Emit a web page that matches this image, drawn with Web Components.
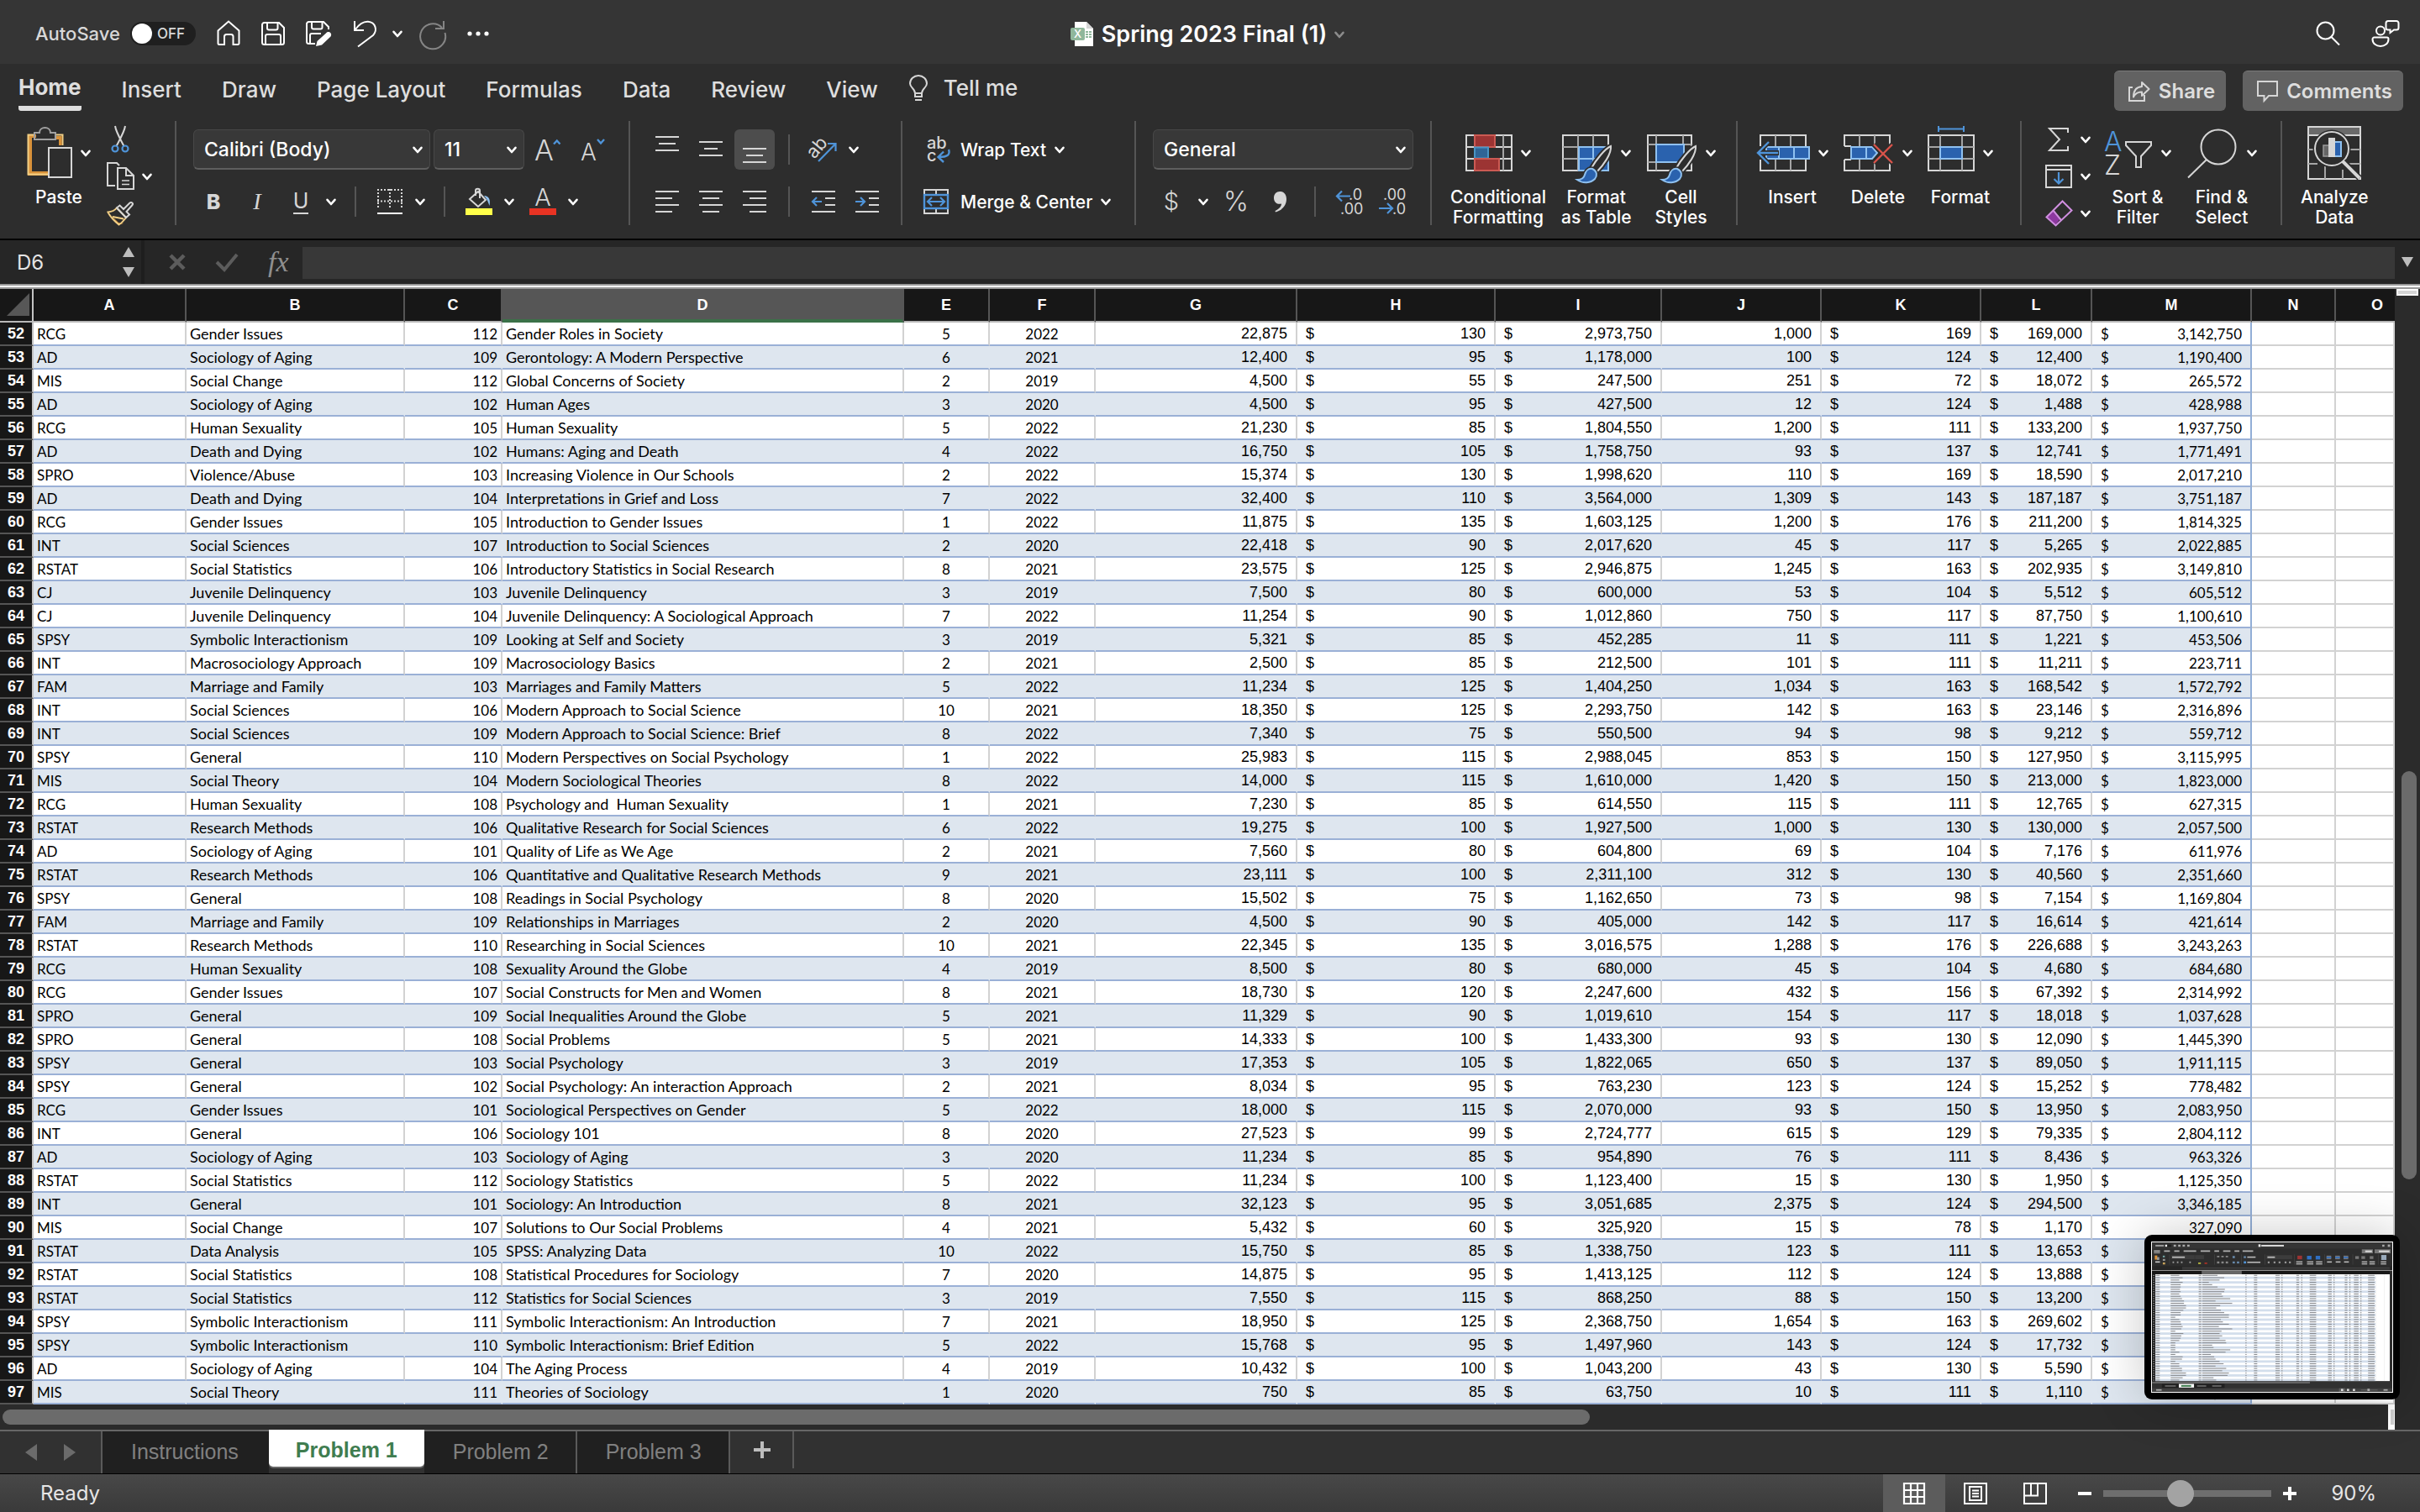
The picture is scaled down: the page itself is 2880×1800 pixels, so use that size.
<!DOCTYPE html>
<html lang="en">
<head>
<meta charset="utf-8">
<title>Spring 2023 Final (1)</title>
<style>
html,body{margin:0;height:100%;background:#2d2d2d}
body{font-family:Inter,"Liberation Sans",sans-serif;color:#fff}
</style>
</head>
<body>
<excel-window></excel-window>
<script>
/* ---------- helpers ---------- */
function define(name, html, setup) {
  const tpl = document.createElement('template');
  tpl.innerHTML = html;
  customElements.define(name, class extends HTMLElement {
    connectedCallback() {
      if (this.shadowRoot) return;
      const root = this.attachShadow({mode: 'open'});
      root.appendChild(tpl.content.cloneNode(true));
      if (setup) setup.call(this, root);
    }
  });
}
const BTN = 'button{font:inherit;color:inherit;background:none;border:0;padding:0;margin:0;cursor:default}';

/* ---------- icons: [width, height, markup] ---------- */
const G = '#d6d6d6', B = '#4f94d9', LB = '#8fc1f0', DB = '#2a62ae';
const s = (d, c = G, w = 2, x = '') => `<path d="${d}" fill="none" stroke="${c}" stroke-width="${w}" ${x}/>`;
const f = (d, c) => `<path d="${d}" fill="${c}"/>`;
const t = (x, y, size, str, extra = '') => `<text x="${x}" y="${y}" font-size="${size}" fill="${G}" ${extra}>${str}</text>`;
const brush = (x, y) => `<g transform="translate(${x} ${y})">` +
  s('M45 1C38 4 27 18 22 27L28 32C36 24 46 10 45 1z', '#2d2d2d', 6) +
  f('M45 1C38 4 27 18 22 27L28 32C36 24 46 10 45 1z', '#2d2d2d') +
  s('M45 1C38 4 27 18 22 27L28 32C36 24 46 10 45 1z', G, 2) +
  `<path d="M23 28c-5-1-8 3-9 7-1 4-4 6-9 6 7 5 16 4 21-1 3-4 3-9-3-12z" fill="${DB}" stroke="#2d2d2d" stroke-width="5"/>` +
  `<path d="M23 28c-5-1-8 3-9 7-1 4-4 6-9 6 7 5 16 4 21-1 3-4 3-9-3-12z" fill="${DB}" stroke="${LB}" stroke-width="2"/></g>`;
const ICONS = {
  chev: [12, 9, s('M1.5 1.8 6 7 10.5 1.8', 'currentColor', 2.6, 'stroke-linecap="round" stroke-linejoin="round"')],
  home: [28, 32, s('M1.5 12.5 14 1.5 26.5 12.5V27.5a1.5 1.5 0 0 1-1.5 1.5H19.5V19.5a2.5 2.5 0 0 0-2.5-2.5H11.5A2.5 2.5 0 0 0 9 19.5V29H3A1.5 1.5 0 0 1 1.500 27.500z', '#fff')],
  save: [28, 28, s('M3.500 1H21L27 7V24.500A2.500 2.500 0 0 1 24.500 27H3.500A2.500 2.500 0 0 1 1 24.500V3.500A2.500 2.500 0 0 1 3.500 1zM7 1V7.500A2 2 0 0 0 9 9.500H17.500A2 2 0 0 0 19.500 7.500V1M5 27V17A2 2 0 0 1 7 15H21A2 2 0 0 1 23 17V27', '#fff')],
  saveedit: [31, 30, s('M11 27H3.500A2.500 2.500 0 0 1 1 24.500V3.500A2.500 2.500 0 0 1 3.500 1H21L27 7V10M7 1V7.500A2 2 0 0 0 9 9.500H17.500A2 2 0 0 0 19.500 7.500V1M5 27V17A2 2 0 0 1 7 15H18', '#fff') + f('M24 14.500c3-3.500 8 0 5.500 4L19 28.500 12 30 13.500 24z', '#fff')],
  undo: [28, 32, s('M2 1V12H13M2.500 11.500C8 4 13 1.500 18 1.800 27 2.500 29.500 12 24 18L6 31.500', '#fff')],
  redo: [33, 32, s('M30 1V10H20M28 9A15 15 0 1 0 31.500 15', '#858585')],
  dots: [26, 6, '<circle cx="3" cy="3" r="2.600" fill="#fff"/><circle cx="13" cy="3" r="2.600" fill="#fff"/><circle cx="23" cy="3" r="2.600" fill="#fff"/>'],
  file: [28, 30, f('M5 0H19L27 8V29H5z', '#fff') + f('M19 0 27 8H19z', '#d5d5d5') + '<rect x="0" y="7" width="17" height="15" rx="2" fill="#8fb79b"/>' + f('M18 11h3v2h-3zM22 11h3v2h-3zM18 14h3v2h-3zM22 14h3v2h-3zM18 17h3v2h-3zM22 17h3v2h-3z', '#8fb79b') + '<text x="8.500" y="19" font-size="13" font-weight="500" text-anchor="middle" fill="#fff">X</text>'],
  search: [30, 30, '<circle cx="11.500" cy="11.500" r="10" fill="none" stroke="#fff" stroke-width="2"/>' + s('M18.500 19 28 28.500', '#fff')],
  people: [34, 32, '<circle cx="11" cy="12.500" r="5" fill="none" stroke="#fff" stroke-width="2"/>' + s('M3.500 20.500H18.500A2 2 0 0 1 20.500 22.500C20.500 28 16 31 11 31S1.500 28 1.500 22.500A2 2 0 0 1 3.500 20.500zM20 1H30A2.500 2.500 0 0 1 32.500 3.500V9A2.500 2.500 0 0 1 30 11.500H27L22.500 15V11.500H20A2.500 2.500 0 0 1 17.500 9V3.500A2.500 2.500 0 0 1 20 1z', '#fff')],
  bulb: [22, 32, s('M7 22C7 17 1 15 1 10.500a10 9.500 0 0 1 20 0C21 15 15 17 15 22zM7 22V26H15V22M7 30H15')],
  share: [26, 24, s('M5 7H1V23H19V16') + s('M16 1 24.500 9 16 17V12.500C11 12.500 8 14 6 18.500 6 11 9 6.500 16 6z', G, 2, 'stroke-linejoin="round"')],
  comment: [25, 26, s('M1 1H24V18H14L8.500 24V18H1z')],
  paste: [54, 62, f('M1 9H11V13H6V53H25V58H1z', '#d9923a') + s('M10 9.500H1.500V56.500H25M34 9.500H42.500V22', '#f2cf85') + f('M34 11H41.500V22H38V15H34z', '#d9923a') + s('M9 15V7H15C15 -1 28 -1 28 7H34V15z', '#a0a0a0') + `<rect x="26" y="25" width="27" height="35" fill="#2d2d2d" stroke="${G}" stroke-width="2"/>`],
  cut: [22, 34, s('M5 1C6 8 12 18 15.500 25M17 1C16 8 10 18 6.500 25', G, 2) + `<circle cx="5" cy="28" r="3.500" fill="none" stroke="${B}" stroke-width="2.200"/><circle cx="17" cy="28" r="3.500" fill="none" stroke="${B}" stroke-width="2.200"/>`],
  copy: [33, 34, s('M10 28H1V1H12L15 4M13 7H23L32 16V32H13zM23 7V16H32') + s('M18 22H27M18 26.500H27', G, 1.600)],
  painter: [33, 30, f('M5 17 14 26 20 27 14 28.500z', '#d9923a') + s('M1.500 13.500C7 13 10 11 12 8.500L23 20C20 24 17 27 14.500 28.500 9 24 4 19 1.500 13.500zM7 19 20 21.500', '#f2cf85') + s('M12 8.500 15.500 5.500 20 10 27.500 2.500C29.500 1 32 3 30.500 5L23.500 13 27 16.500 23 20z', G)],
  fontup: [32, 30, t(0, 28, 34, 'A', 'font-weight="300"') + s('M23 8.500 26.800 4.500 30.500 8.500', B, 2.400)],
  fontdown: [30, 30, t(2, 28, 28, 'A', 'font-weight="300"') + s('M22 3 26 7.500 30 3', B, 2.400)],
  borders: [30, 30, s('M1 0V24M15 0V24M29 0V24M0 1H30M0 14.500H30', G, 2, 'stroke-dasharray="2 2"') + s('M0 29H30', '#fff', 2)],
  fill: [34, 32, s('M6 13 16 4 25 14 16 22zM13 9V3C13 0 18 0 18 3V12', G, 2) + f('M23 9C29 9 31 14 29.500 21 28 17 27 13 23 9z', LB) + f('M1 24H33V32H1z', '#ffff4a')],
  fontcolor: [32, 32, t(16, 21, 29, 'A', 'font-weight="300" text-anchor="middle"') + f('M0 24H32V32H0z', '#e83323')],
  top: [28, 34, s('M0 2H28M4 10H24M0 18H28')],
  middle: [28, 34, s('M0 8H28M6 16H22M0 24H28')],
  bottom: [28, 34, s('M0 16H28M4 24H24M0 32H28')],
  left: [28, 28, s('M0 2H28M0 10H20M0 18H28M0 26H20')],
  center: [28, 28, s('M0 2H28M4 10H24M0 18H28M4 26H24')],
  right: [28, 28, s('M0 2H28M8 10H28M0 18H28M8 26H28')],
  orient: [34, 34, `<g transform="rotate(-50 8 24)">${t(3, 26, 22, 'ab')}</g>` + s('M11 31 31 10.500M22 10H31.500V19', B, 2.200)],
  outdent: [28, 28, s('M0 2H28M16 10H28M16 18H28M0 26H28') + s('M12 14H1M6 9 1 14 6 19', B, 2.200)],
  indent: [28, 28, s('M0 2H28M16 10H28M16 18H28M0 26H28') + s('M0 14H11M6 9 11 14 6 19', B, 2.200)],
  wrap: [34, 34, t(4, 16, 20, 'ab') + t(4, 31, 20, 'c') + s('M30 17C32 23 29 26 18 26M24 19.500 17.500 26 24 32', B, 2.400)],
  merge: [34, 30, s('M1 7V1H29V7M1 23V29H29V23M15 1V7M15 23V29') + `<rect x="1" y="7" width="28" height="16" fill="none" stroke="${B}" stroke-width="2.400"/>` + s('M5 15H25M10 10 5 15 10 20M20 10 25 15 20 20', B, 2.200)],
  dollar: [20, 34, t(8, 27, 29, '$', 'font-weight="300" text-anchor="middle"')],
  percent: [34, 34, t(16, 28, 32, '%', 'font-weight="300" text-anchor="middle"')],
  comma: [16, 26, f('M7 1C12 1 15 4.500 15 10 15 17 10 23.500 2 25.500L1.500 24C6 22 9 19 9 15.500 3 17 0 13 0 8.500 0 4 3 1 7 1z', G)],
  decup: [34, 32, t(16, 14, 18, '.0', '') + t(6, 31, 18, '.00', '') + s('M18 9.500H2M8 3.500 2 9.500 8 15.500', B, 2.200)],
  decdown: [34, 32, t(5, 14, 18, '.00', '') + t(16, 31, 18, '.0', '') + s('M0 24H16M10 18 16 24 10 30', B, 2.200)],
  cond: [56, 64, s('M1 11H55V53H1zM1 25H55M1 39H55', G) + s('M45 11V53M11 11V53', '#a5a5a5') + '<rect x="11" y="11" width="24" height="14" fill="#9c3433" stroke="#cb5a53" stroke-width="2"/><rect x="11" y="25.500" width="16" height="13" fill="#2f6596" stroke="#4a94c4" stroke-width="2"/><rect x="11" y="39" width="29" height="14" fill="#9c3433" stroke="#cb5a53" stroke-width="2"/>'],
  fmttable: [60, 64, s('M1 11H55V53H1z') + s('M1 25H55M1 39H20M19 11V53M37 11V25', '#a5a5a5') + `<path d="M20 25H55V53H20zM37 25V53M20 39H55" fill="${DB}" stroke="${LB}" stroke-width="2"/>` + brush(13, 23)],
  cellstyle: [60, 64, s('M1 11H53V53H1z') + s('M1 22H53M1 43H53M11 11V53M43 11V53', '#a5a5a5') + `<rect x="11" y="22" width="33" height="21" fill="${DB}" stroke="${LB}" stroke-width="2"/>` + brush(13, 23)],
  insert: [64, 64, s('M5 24V11H59V24M5 40V53H59V40') + s('M23 11V53M41 11V53', '#a5a5a5') + `<path d="M12 25H63V39H12zM27 25V39M45 25V39" fill="${DB}" stroke="${LB}" stroke-width="2"/>` + s('M27 32H4M15 19 2 32 15 45', '#2d2d2d', 6) + s('M26 32H3M15 19 2 32 15 45', B, 2.400)],
  del: [60, 64, s('M1 24V11H55V22M1 24H9M1 40H9M1 40V53H55V44') + s('M19 11V24M37 11V24M19 40V53M37 40V53', '#a5a5a5') + `<path d="M9 25H34L40 32 34 39H9zM27 25V39" fill="${DB}" stroke="${LB}" stroke-width="2"/>` + s('M36 22 58 44M58 22 36 44', '#2d2d2d', 6) + s('M36 22 58 44M58 22 36 44', '#d9534a', 2.400)],
  format: [56, 64, s('M1 11H55V53H1z') + s('M1 25H55M1 39H55M15 11V53M41 11V53', '#a5a5a5') + `<rect x="15" y="25" width="26" height="14" fill="${DB}" stroke="${LB}" stroke-width="2"/>` + s('M13 0V7M43 0V7M13 3.500H43', B)],
  sigma: [26, 28, s('M24 6V1H2L14 14 2 27H24V22')],
  filldown: [33, 28, s('M1 1H31V27H1zM1 6H31') + s('M16 9V22M10.500 17 16 22.500 21.500 17', B, 2.200)],
  eraser: [33, 32, f('M2 20 10 12 18 22 12 30z', '#8d38a0') + s('M1.500 20.500 20.500 1.500 31.500 12.500 12.500 30.500zM9.500 12.500 18.500 23.500', '#d08fe0', 2)],
  sort: [58, 64, `<text x="0" y="30" font-size="32" font-weight="300" fill="${B}">A</text>` + t(0, 58, 32, 'Z', 'font-weight="300"') + s('M26 19H56V23L44 36V49H38V36L26 23z')],
  find: [62, 64, '<circle cx="38" cy="25" r="20.500" fill="none" stroke="' + G + '" stroke-width="2"/>' + s('M24 40 2 61.500')],
  analyze: [64, 64, f('M1 1H63V11H1z', '#6a6a6a') + s('M1 1H63V63H1zM1 11H63', G) + s('M1 28H12M50 28H63M1 45H12M46 45H63M21 48V63M42 52V63', '#a5a5a5') + `<circle cx="29" cy="27" r="20" fill="#2d2d2d" stroke="#2d2d2d" stroke-width="5"/><circle cx="29" cy="27" r="20" fill="none" stroke="${G}" stroke-width="2"/><path d="M19 23H26V36H19z" fill="#666" stroke="#999" stroke-width="1.500"/><path d="M32 19H40V36H32z" fill="${DB}" stroke="${LB}" stroke-width="2"/><path d="M25 14H33V37H25z" fill="${G}"/>` + s('M43 42 62 62', '#2d2d2d', 7) + s('M42 42 62 62', G, 4)],
  x: [20, 20, s('M2 2 18 18M18 2 2 18', '#5c5c5c', 4.500)],
  check: [28, 22, s('M2 11 11 20 26 2', '#5c5c5c', 4)],
  up: [14, 12, f('M7 0 14 12H0z', '#bdbdbd')],
  down: [14, 12, f('M7 12 14 0H0z', '#bdbdbd')],
  prev: [14, 20, f('M14 0V20L0 10z', '#6b6b6b')],
  next: [14, 20, f('M0 0V20L14 10z', '#6b6b6b')],
  plus: [20, 20, s('M10 0V20M0 10H20', '#bdbdbd', 4)],
  corner: [28, 28, f('M27 0V27H0z', '#575757')],
  vgrid: [26, 26, s('M1 1H25V25H1zM9 1V25M17 1V25M1 9H25M1 17H25', '#fff', 2.200)],
  vpage: [28, 26, s('M1 1H27V25H1z', '#fff') + s('M7 5H21V21H7zM10 9.500H18M10 13H18M10 16.500H18', '#fff')],
  vbreak: [28, 26, s('M1 1H27V25H1zM1 15.500H17V1M9 1V15.500', '#fff')],
  zminus: [16, 4, f('M0 0H16V4H0z', '#fff')],
  zplus: [16, 16, f('M6 0H10V6H16V10H10V16H6V10H0V6H6z', '#fff')]
};
define('ui-icon', `<style>:host{display:block;flex:none}svg{display:block;overflow:visible}text{font-family:Inter,"Liberation Sans",sans-serif}</style>`, function (root) {
  const [w, h, m] = ICONS[this.getAttribute('name')];
  root.innerHTML += `<svg width="${w}" height="${h}" viewBox="0 0 ${w} ${h}" aria-hidden="true">${m}</svg>`;
});

/* ---------- ribbon parts ---------- */
define('tool-button', `<style>${BTN}
:host{display:block;flex:none}
button{display:flex;align-items:center;justify-content:center;width:48px;height:48px;border-radius:6px;color:#d6d6d6}
:host([pressed]) button{background:#4d4d4d}
:host([compact]) button{width:34px;height:44px}
</style><button><slot></slot></button>`, function (root) {
  root.querySelector('button').setAttribute('aria-label', this.getAttribute('label') || '');
});
define('menu-arrow', `<style>${BTN}:host{display:block;flex:none;margin:0 6px 0 2px}button{display:block}</style><button aria-label="More options"><ui-icon name="chev"></ui-icon></button>`);
define('tool-divider', `<style>:host{display:block;flex:none;width:2px;height:36px;background:#555;margin:0 12px}</style>`);
define('text-tool', `<style>${BTN}
:host{display:block}
button{display:flex;align-items:center;height:48px;gap:10px;font-size:21px;font-weight:500;white-space:nowrap}
</style><button><span class="pic"></span><span><slot></slot></span><ui-icon name="chev"></ui-icon></button>`, function (root) {
  root.querySelector('.pic').innerHTML = `<ui-icon name="${this.getAttribute('icon')}"></ui-icon>`;
});
define('big-button', `<style>${BTN}
:host{display:block;flex:none}
button{display:flex;flex-direction:column;align-items:center;padding-top:6px;gap:9px;font-size:21px;line-height:24px;font-weight:500;text-align:center}
.pic{display:flex;align-items:center;gap:10px;height:64px}
</style><button><span class="pic"></span><span><slot></slot></span></button>`, function (root) {
  const pic = root.querySelector('.pic');
  pic.innerHTML = `<ui-icon name="${this.getAttribute('icon')}"></ui-icon>` + (this.hasAttribute('plain') ? '' : '<ui-icon name="chev"></ui-icon>');
});
define('drop-list', `<style>
:host{display:block;flex:none}
.box{display:grid;align-items:center}
select,ui-icon{grid-area:1/1}
select{appearance:none;width:100%;height:48px;box-sizing:border-box;padding:0 12px;border:1px solid #484848;border-bottom:2px solid #5e5e5e;border-radius:6px;background:#383838;color:#fff;font:500 23px Inter,"Liberation Sans",sans-serif}
ui-icon{justify-self:end;margin-right:9px;pointer-events:none}
</style><div class="box"><select><option></option></select><ui-icon name="chev"></ui-icon></div>`, function (root) {
  root.querySelector('select').setAttribute('aria-label', this.getAttribute('label'));
  root.querySelector('option').textContent = this.getAttribute('value');
});
define('ribbon-group', `<style>
:host{display:block;flex:none;box-sizing:border-box;height:124px;border-right:2px solid #555}
:host(:last-of-type){border-right:0;flex:1}
</style><slot></slot>`);

define('title-bar', `<style>${BTN}
:host{display:grid;grid-template-columns:1fr auto 1fr;align-items:center;height:76px;box-sizing:border-box;background:#353535;padding:4px 24px 0 42px}
.left,.mid,.right{display:flex;align-items:center}
.left{gap:25px}
.auto{display:flex;align-items:center;gap:12px;font-size:22px;font-weight:500;color:#d8d8d8}
.switch{display:flex;align-items:center;gap:6px;width:78px;height:28px;border-radius:14px;background:#1f1f1f;font-size:17px}
.knob{width:24px;height:24px;border-radius:50%;background:#fff;margin-left:2px}
.undo{display:flex;align-items:center;gap:19px}
.mid{gap:9px;margin-right:24px;padding-top:2px}
h1{font-size:27px;font-weight:600;line-height:32px;margin:0}
.mid .c{color:#8c8c8c;display:flex}
.right{justify-content:flex-end;gap:36px}
</style>
<div class="left">
<button class="auto" role="switch" aria-checked="false">AutoSave<span class="switch"><span class="knob"></span>OFF</span></button>
<button aria-label="Home"><ui-icon name="home"></ui-icon></button>
<button aria-label="Save"><ui-icon name="save"></ui-icon></button>
<button aria-label="Save as"><ui-icon name="saveedit"></ui-icon></button>
<span class="undo"><button aria-label="Undo"><ui-icon name="undo"></ui-icon></button><button aria-label="Undo list"><ui-icon name="chev"></ui-icon></button><button aria-label="Redo"><ui-icon name="redo"></ui-icon></button></span>
<button aria-label="More"><ui-icon name="dots"></ui-icon></button>
</div>
<div class="mid"><ui-icon name="file"></ui-icon><h1>Spring 2023 Final (1)</h1><span class="c"><ui-icon name="chev"></ui-icon></span></div>
<div class="right"><button aria-label="Search"><ui-icon name="search"></ui-icon></button><button aria-label="Presence"><ui-icon name="people"></ui-icon></button></div>`);

define('ribbon-tabs', `<style>${BTN}
:host{display:flex;justify-content:space-between;height:68px;padding:0 20px 0 22px}
nav{display:flex;gap:48px;align-items:flex-start;padding-top:12px}
nav button{display:block;height:38px;line-height:32px;font-size:26px;font-weight:500;color:#dedede;white-space:nowrap}
nav button[aria-current]{font-weight:700;border-bottom:6px solid #dedede;border-radius:3px;height:44px;padding-bottom:6px}
nav button.tell{display:flex;align-items:center;gap:19px;margin-left:-11px;height:34px}
.act{display:flex;gap:20px;padding-top:8px}
.act button{display:flex;align-items:center;height:48px;padding:0 13px 0 17px;gap:10px;border-radius:6px;background:#626262;border-top:1px solid #7a7a7a;box-sizing:border-box;font-size:24px;font-weight:600;color:#dedede}
</style>
<nav><button aria-current="page">Home</button><button>Insert</button><button>Draw</button><button>Page Layout</button><button>Formulas</button><button>Data</button><button>Review</button><button>View</button><button class="tell"><ui-icon name="bulb"></ui-icon>Tell me</button></nav>
<div class="act"><button><ui-icon name="share"></ui-icon>Share</button><button><ui-icon name="comment"></ui-icon>Comments</button></div>`);

define('ribbon-body', `<style>
:host{display:flex;height:140px;border-bottom:2px solid #000}
.rows{display:flex;flex-direction:column;gap:14px;padding:10px 0 0 20px}
.row{display:flex;align-items:center;gap:4px;height:48px}
.text{padding-left:25px}
.bigs{display:flex;align-items:flex-start;gap:18px;padding-left:22px}
.stack{display:flex;flex-direction:column}
.pair{display:flex;align-items:center;gap:7px;height:44px}
.b{font-weight:800;font-size:25px}.i{font:italic 28px "Liberation Serif",serif}.u{font-size:25px;border-bottom:2px solid #d6d6d6;line-height:27px}
.clip{padding-left:32px}
.edit{gap:10px;padding-left:27px}
.tail{padding-left:0}
.w1{width:210px}.w2{width:540px}.w3{width:324px}.w4{width:278px}.w5{width:352px}.w6{width:364px}.w7{width:338px}.w8{width:310px}
.font{width:282px}.size{width:108px}.num{width:310px}
</style>
<ribbon-group class="w1"><div class="bigs clip"><big-button icon="paste">Paste</big-button>
 <div class="stack"><div class="pair"><tool-button compact label="Cut"><ui-icon name="cut"></ui-icon></tool-button></div><div class="pair"><tool-button compact label="Copy"><ui-icon name="copy"></ui-icon></tool-button><menu-arrow></menu-arrow></div><div class="pair"><tool-button compact label="Format Painter"><ui-icon name="painter"></ui-icon></tool-button></div></div></div></ribbon-group>
<ribbon-group class="w2"><div class="rows">
 <div class="row"><drop-list class="font" label="Font" value="Calibri (Body)"></drop-list><drop-list class="size" label="Font size" value="11"></drop-list><tool-button label="Increase font size"><ui-icon name="fontup"></ui-icon></tool-button><tool-button label="Decrease font size"><ui-icon name="fontdown"></ui-icon></tool-button></div>
 <div class="row"><tool-button label="Bold"><span class="b">B</span></tool-button><tool-button label="Italic"><span class="i">I</span></tool-button><tool-button label="Underline"><span class="u">U</span></tool-button><menu-arrow></menu-arrow><tool-divider></tool-divider><tool-button label="Borders"><ui-icon name="borders"></ui-icon></tool-button><menu-arrow></menu-arrow><tool-divider></tool-divider><tool-button label="Fill colour"><ui-icon name="fill"></ui-icon></tool-button><menu-arrow></menu-arrow><tool-button label="Font colour"><ui-icon name="fontcolor"></ui-icon></tool-button><menu-arrow></menu-arrow></div>
</div></ribbon-group>
<ribbon-group class="w3"><div class="rows">
 <div class="row"><tool-button label="Top align"><ui-icon name="top"></ui-icon></tool-button><tool-button label="Middle align"><ui-icon name="middle"></ui-icon></tool-button><tool-button pressed label="Bottom align"><ui-icon name="bottom"></ui-icon></tool-button><tool-divider></tool-divider><tool-button label="Orientation"><ui-icon name="orient"></ui-icon></tool-button><menu-arrow></menu-arrow></div>
 <div class="row"><tool-button label="Align left"><ui-icon name="left"></ui-icon></tool-button><tool-button label="Centre"><ui-icon name="center"></ui-icon></tool-button><tool-button label="Align right"><ui-icon name="right"></ui-icon></tool-button><tool-divider></tool-divider><tool-button label="Decrease indent"><ui-icon name="outdent"></ui-icon></tool-button><tool-button label="Increase indent"><ui-icon name="indent"></ui-icon></tool-button></div>
</div></ribbon-group>
<ribbon-group class="w4"><div class="rows text"><text-tool icon="wrap">Wrap Text</text-tool><text-tool icon="merge">Merge &amp; Center</text-tool></div></ribbon-group>
<ribbon-group class="w5"><div class="rows">
 <div class="row"><drop-list class="num" label="Number format" value="General"></drop-list></div>
 <div class="row"><tool-button label="Currency"><ui-icon name="dollar"></ui-icon></tool-button><menu-arrow></menu-arrow><tool-button label="Percent"><ui-icon name="percent"></ui-icon></tool-button><tool-button label="Comma style"><ui-icon name="comma"></ui-icon></tool-button><tool-divider></tool-divider><tool-button label="Increase decimal"><ui-icon name="decup"></ui-icon></tool-button><tool-button label="Decrease decimal"><ui-icon name="decdown"></ui-icon></tool-button></div>
</div></ribbon-group>
<ribbon-group class="w6"><div class="bigs"><big-button icon="cond">Conditional<br>Formatting</big-button><big-button icon="fmttable">Format<br>as Table</big-button><big-button icon="cellstyle">Cell<br>Styles</big-button></div></ribbon-group>
<ribbon-group class="w7"><div class="bigs"><big-button icon="insert">Insert</big-button><big-button icon="del">Delete</big-button><big-button icon="format">Format</big-button></div></ribbon-group>
<ribbon-group class="w8"><div class="bigs edit">
 <div class="stack"><div class="pair"><tool-button compact label="AutoSum"><ui-icon name="sigma"></ui-icon></tool-button><menu-arrow></menu-arrow></div><div class="pair"><tool-button compact label="Fill"><ui-icon name="filldown"></ui-icon></tool-button><menu-arrow></menu-arrow></div><div class="pair"><tool-button compact label="Clear"><ui-icon name="eraser"></ui-icon></tool-button><menu-arrow></menu-arrow></div></div>
 <div class="bigs tail"><big-button icon="sort">Sort &amp;<br>Filter</big-button><big-button icon="find">Find &amp;<br>Select</big-button></div></div></ribbon-group>
<ribbon-group><div class="bigs"><big-button plain icon="analyze">Analyze<br>Data</big-button></div></ribbon-group>`);

define('formula-bar', `<style>${BTN}
:host{display:flex;align-items:stretch;height:52px;background:#262626;border-bottom:2px solid #999;box-shadow:0 2px #fff,0 4px #999;margin-bottom:4px}
input{font:inherit;color:inherit;border:0;outline:0;padding:0}
.name{display:flex;align-items:center;width:148px;padding-left:20px;border-right:4px solid #1e1e1e}
.name input{width:126px;background:none;font-size:24px;color:#e4e4e4}
.arrows{display:flex;flex-direction:column;gap:12px}
.keys{display:flex;align-items:center;gap:35px;padding:0 16px 0 29px}
.fx{font:italic 34px "Liberation Serif",serif;color:#8f8f8f}
.text{flex:1;margin:8px 0 6px;background:#383838}
.more{display:flex;align-items:center;justify-content:center;width:30px}
</style>
<div class="name"><input aria-label="Name box" value="D6"><div class="arrows"><ui-icon name="up"></ui-icon><ui-icon name="down"></ui-icon></div></div>
<div class="keys"><button aria-label="Cancel"><ui-icon name="x"></ui-icon></button><button aria-label="Enter"><ui-icon name="check"></ui-icon></button><button class="fx" aria-label="Insert function">fx</button></div>
<input class="text" aria-label="Formula"><button class="more" aria-label="Expand"><ui-icon name="down"></ui-icon></button>`);

/* ---------- sheet: department|category|code|title|edition|year|copies|price|sold|cost ---------- */
const ROWS = `RCG|Gender Issues|112|Gender Roles in Society|5|2022|22875|130|1000|169
AD|Sociology of Aging|109|Gerontology: A Modern Perspective|6|2021|12400|95|100|124
MIS|Social Change|112|Global Concerns of Society|2|2019|4500|55|251|72
AD|Sociology of Aging|102|Human Ages|3|2020|4500|95|12|124
RCG|Human Sexuality|105|Human Sexuality|5|2022|21230|85|1200|111
AD|Death and Dying|102|Humans: Aging and Death|4|2022|16750|105|93|137
SPRO|Violence/Abuse|103|Increasing Violence in Our Schools|2|2022|15374|130|110|169
AD|Death and Dying|104|Interpretations in Grief and Loss|7|2022|32400|110|1309|143
RCG|Gender Issues|105|Introduction to Gender Issues|1|2022|11875|135|1200|176
INT|Social Sciences|107|Introduction to Social Sciences|2|2020|22418|90|45|117
RSTAT|Social Statistics|106|Introductory Statistics in Social Research|8|2021|23575|125|1245|163
CJ|Juvenile Delinquency|103|Juvenile Delinquency|3|2019|7500|80|53|104
CJ|Juvenile Delinquency|104|Juvenile Delinquency: A Sociological Approach|7|2022|11254|90|750|117
SPSY|Symbolic Interactionism|109|Looking at Self and Society|3|2019|5321|85|11|111
INT|Macrosociology Approach|109|Macrosociology Basics|2|2021|2500|85|101|111
FAM|Marriage and Family|103|Marriages and Family Matters|5|2022|11234|125|1034|163
INT|Social Sciences|106|Modern Approach to Social Science|10|2021|18350|125|142|163
INT|Social Sciences|109|Modern Approach to Social Science: Brief|8|2022|7340|75|94|98
SPSY|General|110|Modern Perspectives on Social Psychology|1|2022|25983|115|853|150
MIS|Social Theory|104|Modern Sociological Theories|8|2022|14000|115|1420|150
RCG|Human Sexuality|108|Psychology and  Human Sexuality|1|2021|7230|85|115|111
RSTAT|Research Methods|106|Qualitative Research for Social Sciences|6|2022|19275|100|1000|130
AD|Sociology of Aging|101|Quality of Life as We Age|2|2021|7560|80|69|104
RSTAT|Research Methods|106|Quantitative and Qualitative Research Methods|9|2021|23111|100|312|130
SPSY|General|108|Readings in Social Psychology|8|2020|15502|75|73|98
FAM|Marriage and Family|109|Relationships in Marriages|2|2020|4500|90|142|117
RSTAT|Research Methods|110|Researching in Social Sciences|10|2021|22345|135|1288|176
RCG|Human Sexuality|108|Sexuality Around the Globe|4|2019|8500|80|45|104
RCG|Gender Issues|107|Social Constructs for Men and Women|8|2021|18730|120|432|156
SPRO|General|109|Social Inequalities Around the Globe|5|2021|11329|90|154|117
SPRO|General|108|Social Problems|5|2021|14333|100|93|130
SPSY|General|103|Social Psychology|3|2019|17353|105|650|137
SPSY|General|102|Social Psychology: An interaction Approach|2|2021|8034|95|123|124
RCG|Gender Issues|101|Sociological Perspectives on Gender|5|2022|18000|115|93|150
INT|General|106|Sociology 101|8|2020|27523|99|615|129
AD|Sociology of Aging|103|Sociology of Aging|3|2020|11234|85|76|111
RSTAT|Social Statistics|112|Sociology Statistics|5|2022|11234|100|15|130
INT|General|101|Sociology: An Introduction|8|2021|32123|95|2375|124
MIS|Social Change|107|Solutions to Our Social Problems|4|2021|5432|60|15|78
RSTAT|Data Analysis|105|SPSS: Analyzing Data|10|2022|15750|85|123|111
RSTAT|Social Statistics|108|Statistical Procedures for Sociology|7|2020|14875|95|112|124
RSTAT|Social Statistics|112|Statistics for Social Sciences|3|2019|7550|115|88|150
SPSY|Symbolic Interactionism|111|Symbolic Interactionism: An Introduction|7|2021|18950|125|1654|163
SPSY|Symbolic Interactionism|110|Symbolic Interactionism: Brief Edition|5|2022|15768|95|143|124
AD|Sociology of Aging|104|The Aging Process|4|2019|10432|100|43|130
MIS|Social Theory|111|Theories of Sociology|1|2020|750|85|10|111`.split('\n').map(l => l.split('|'));
const COLS = [['A', 182], ['B', 260], ['C', 116], ['D', 478], ['E', 102], ['F', 126], ['G', 240], ['H', 236], ['I', 198], ['J', 190], ['K', 190], ['L', 132], ['M', 190], ['N', 100], ['O', 0]];

define('sheet-grid', `<style>
:host{display:block;flex:1;min-width:0;overflow:hidden;background:#fff}
table{table-layout:fixed;width:100%;border-collapse:separate;border-spacing:0;font:17px/25px Lato,"Liberation Sans",sans-serif;color:#000}
td,th{padding:1px 4px 0;height:25px;white-space:pre;overflow:hidden}
thead th{height:37px;background:#171717;color:#fff;font:bold 18px "Liberation Sans",sans-serif;border-right:2px solid #555;border-bottom:2px solid #b8b8b8}
thead th.sel{background:#565656;border-right-color:#565656;box-shadow:inset 0 -2px #3b7148;border-bottom-color:#3b7148}
thead th.pre{border-right-color:#565656}
thead th:first-child{border-right-color:#c4c4c4;padding:0 0 0 8px;height:38px}
thead th:last-child{border-right:0;padding-left:32px}
tbody th{background:#171717;color:#fff;font:bold 18px/25px "Liberation Sans",sans-serif;padding:1px 0 0;border-right:2px solid #c4c4c4;border-bottom:2px solid #555}
td{border-right:2px solid #d2d2d2;border-bottom:2px solid #9ab0d6;background:#fff}
tr:nth-child(even) td{background:#dee6ef;border-right-color:#dee6ef}
tbody tr td.e,tbody tr:nth-child(even) td.e{background:#fff;border-color:#d2d2d2}
tbody tr td.m{border-right-color:#92aed6}
.s{font-size:18px}
.r{text-align:right}.c{text-align:center}
.n{font-family:"Liberation Sans",sans-serif;font-size:18px}
.n,.m{text-align:right;padding:1px 10px 0}
.acc{display:flex;justify-content:space-between}
</style><table><colgroup></colgroup><thead><tr></tr></thead><tbody></tbody></table>`, function (root) {
  const q = x => root.querySelector(x), nf = x => x.toLocaleString('en-US');
  q('colgroup').innerHTML = '<col style="width:40px">' + COLS.map(c => c[1] ? `<col style="width:${c[1]}px">` : '<col>').join('');
  q('thead tr').innerHTML = '<th><ui-icon name="corner"></ui-icon></th>' + COLS.map(c => `<th scope="col" class="${c[0] === 'D' ? 'sel' : c[0] === 'C' ? 'pre' : ''}">${c[0]}</th>`).join('');
  const acc = (v, c) => `<td class="${c}"><div class="acc"><span>$</span><span>${nf(v)}</span></div></td>`;
  q('tbody').innerHTML = ROWS.map((r, i) => {
    const [g, h, j, k] = r.slice(6).map(Number);
    return `<tr><th scope="row">${52 + i}</th><td>${r[0]}</td><td class="s">${r[1]}</td><td class="r">${r[2]}</td><td class="s">${r[3]}</td><td class="c">${r[4]}</td><td class="c">${r[5]}</td><td class="n">${nf(g)}</td>${acc(h, 'n')}${acc(g * h, 'n')}<td class="n">${nf(j)}</td>${acc(k, 'n')}${acc(j * k, 'n')}${acc(g * h + j * k, 'm')}<td class="e"></td><td class="e"></td></tr>`;
  }).join('');
});

define('side-scroll', `<style>
:host{display:flex;flex-direction:column;width:30px;flex:none;background:#2b2b2b}
.split{height:4px;margin:2px 4px 0;background:#d5d5d5;box-shadow:0 0 0 2px #fff}
.track{flex:1;display:grid;grid-template-rows:568fr 486fr 268fr;justify-content:center}
.thumb{grid-row:2;width:18px;border-radius:9px;background:#6b6b6b;margin-left:4px}
</style><div class="split"></div><div class="track"><div class="thumb"></div></div>`);
define('bottom-scroll', `<style>
:host{display:flex;height:30px;background:#2b2b2b;padding-right:30px}
.track{flex:1;display:flex;align-items:center;padding:0 3px}
.thumb{width:66.6%;height:18px;border-radius:9px;background:#6b6b6b}
.split{width:8px;background:linear-gradient(#d0d0d0,#d0d0d0) 3px 6px/4px 18px no-repeat #fff}
</style><div class="track"><div class="thumb"></div></div><div class="split"></div>`);

define('sheet-tabs', `<style>${BTN}
:host{display:flex;height:50px;border-top:2px solid #666;border-bottom:1px solid #000;background:#313131;font:25px "Liberation Sans",sans-serif}
.nav{display:flex;align-items:center;gap:32px;width:90px;padding-left:30px}
.tab{display:flex;align-items:center;padding:0 34px 2px;background:#202020;color:#808080;box-shadow:inset -2px 0 #5a5a5a}
.tab.on{color:#3f7d50;background:#fff;box-shadow:0 2px #666;font-weight:bold;border-radius:0 0 5px 5px;height:44px;margin-top:-2px;padding:4px 32px 0}
.tab:first-of-type{box-shadow:inset 2px 0 #5a5a5a;padding:0 36px 2px}
.add{display:flex;align-items:center;justify-content:center;width:76px;box-shadow:inset -2px 0 #5a5a5a;height:44px}
</style><div class="nav"><ui-icon name="prev"></ui-icon><ui-icon name="next"></ui-icon></div>
<button class="tab">Instructions</button><button class="tab on">Problem 1</button><button class="tab">Problem 2</button><button class="tab">Problem 3</button><button class="add" aria-label="New sheet"><ui-icon name="plus"></ui-icon></button>`);

define('status-bar', `<style>${BTN}
:host{display:flex;align-items:center;justify-content:space-between;height:45px;padding:0 52px 0 48px;background:linear-gradient(#484848,#3a3a3a);font-size:24px;color:#e6e6e6}
.right,.views{display:flex;align-items:center}
.views button{display:flex;align-items:center;justify-content:center;width:71px;height:45px}
.views button.on{width:74px;background:#5c5c5c}
.zoom{display:flex;align-items:center;gap:14px;padding:0 41px 0 16px}
.zoom button{display:flex}
input{appearance:none;width:200px;height:32px;margin:0;background:linear-gradient(#6e6e6e,#6e6e6e) center/100% 8px no-repeat}
input::-webkit-slider-thumb{appearance:none;width:32px;height:32px;border-radius:50%;background:#a3a3a3}
</style><span>Ready</span><div class="right"><div class="views"><button class="on" aria-label="Normal"><ui-icon name="vgrid"></ui-icon></button><button aria-label="Page layout"><ui-icon name="vpage"></ui-icon></button><button aria-label="Page break"><ui-icon name="vbreak"></ui-icon></button></div>
<div class="zoom"><button aria-label="Zoom out"><ui-icon name="zminus"></ui-icon></button><input type="range" min="0" max="100" value="45" aria-label="Zoom"><button aria-label="Zoom in"><ui-icon name="zplus"></ui-icon></button></div><span>90%</span></div>`);

/* Floating preview: a miniature of the window, drawn as blocks. */
define('preview-float', `<style>
:host{display:flex;align-items:center;justify-content:center;position:absolute;right:24px;bottom:134px;width:304px;height:196px;background:#000;border-radius:9px;box-shadow:0 0 60px rgba(0,0,0,.22)}
svg{display:block;width:286px;height:178px;border:1px solid #fff}
</style>`, function (root) {
  let m = '';
  const r = (x, y, w, h, c) => { m += `<rect x="${x}" y="${y}" width="${w}" height="${h}" fill="${c}"/>`; };
  r(0, 0, 2880, 1800, '#2d2d2d'); r(0, 0, 2880, 76, '#353535');
  r(42, 30, 100, 20, '#999'); r(155, 26, 78, 28, '#1f1f1f'); r(158, 28, 24, 24, '#fff');
  [260, 314, 367, 423].forEach(x => r(x, 28, 28, 24, '#aaa'));
  r(1276, 24, 26, 30, '#eee'); r(1311, 30, 270, 20, '#ddd'); r(2760, 28, 26, 24, '#aaa'); r(2826, 26, 28, 28, '#aaa');
  [[23, 74], [145, 70], [267, 62], [379, 151], [583, 114], [748, 57], [853, 87], [989, 59], [1086, 127]].forEach(a => r(a[0], 96, a[1], 18, '#b0b0b0'));
  r(23, 124, 74, 8, '#ccc'); r(2515, 84, 133, 48, '#777'); r(2668, 84, 192, 48, '#777'); r(2556, 98, 80, 20, '#ddd'); r(2720, 98, 126, 20, '#ddd');
  [209, 749, 1073, 1351, 1703, 2067, 2405, 2715].forEach(x => r(x, 144, 4, 124, '#555'));
  r(34, 158, 30, 50, '#d9923a'); r(60, 178, 28, 34, '#999'); r(40, 228, 56, 16, '#ccc'); r(130, 160, 24, 20, '#7aa'); r(130, 200, 28, 22, '#999'); r(130, 242, 28, 24, '#c9a35a');
  r(230, 154, 282, 48, '#3c3c3c'); r(516, 154, 108, 48, '#3c3c3c'); r(1371, 154, 310, 48, '#3c3c3c'); r(242, 170, 152, 18, '#bbb'); r(1384, 170, 90, 18, '#bbb');
  [247, 299, 348, 448].forEach(x => r(x, 230, 18, 20, '#999')); r(554, 246, 32, 12, '#ffff4a'); r(630, 246, 32, 12, '#e83323');
  [780, 832, 884].forEach(x => { r(x, 162, 28, 18, '#888'); r(x, 230, 28, 24, '#888'); }); r(966, 230, 28, 24, '#68a'); r(1018, 230, 28, 24, '#68a'); r(966, 164, 28, 26, '#68a');
  r(1100, 166, 26, 24, '#68a'); r(1142, 170, 100, 16, '#bbb'); r(1100, 228, 28, 26, '#4f94d9'); r(1142, 232, 158, 16, '#bbb');
  [1388, 1458, 1518, 1590, 1642].forEach(x => r(x, 230, 22, 22, '#999'));
  r(1743, 160, 56, 44, '#9c3433'); [1858, 1962].forEach(x => r(x, 162, 54, 44, '#2f70c4'));
  [2092, 2196, 2296].forEach(x => { r(x, 160, 56, 44, '#777'); r(x, 174, 56, 16, '#2f70c4'); r(x + 6, 228, 58, 16, '#bbb'); });
  [1728, 1858, 1966].forEach(x => { r(x, 228, 76, 14, '#bbb'); r(x, 252, 76, 14, '#bbb'); });
  [2436, 2510, 2610].forEach(x => r(x, 166, 44, 34, '#777')); r(2748, 152, 62, 60, '#9ab'); [2514, 2606, 2742].forEach(x => { r(x, 228, 66, 14, '#bbb'); r(x, 252, 66, 14, '#bbb'); });
  r(0, 286, 2880, 52, '#262626'); r(362, 294, 2488, 38, '#383838'); r(0, 338, 2880, 6, '#ddd');
  r(0, 344, 2850, 40, '#171717'); r(596, 344, 480, 40, '#666'); r(0, 384, 40, 1288, '#171717'); r(40, 384, 2810, 1288, '#fff');
  const X = [44, 224, 560, 602, 1120, 1222, 1480, 1730, 1890, 2110, 2310, 2420, 2590], W = [50, 0, 32, 0, 14, 40, 52, 34, 78, 44, 32, 56, 78];
  ROWS.forEach((d, i) => {
    const y = 384 + i * 28;
    if (i % 2) r(40, y, 2640, 28, '#d3deec');
    r(12, y + 8, 18, 12, '#888');
    X.forEach((x, k) => r(x, y + 8, W[k] || d[k].length * 8, 11, '#8a8c90'));
    [1554, 1790, 2178, 2368, 2500].forEach(x => r(x, y + 7, 10, 14, '#777'));
  });
  [2680, 2780].forEach(x => r(x, 384, 3, 1288, '#d5d5d5'));
  r(0, 1672, 2880, 128, '#313131'); r(3, 1680, 1890, 18, '#6b6b6b'); r(120, 1704, 750, 50, '#202020'); r(322, 1704, 182, 44, '#fff');
  r(156, 1720, 130, 18, '#666'); r(350, 1718, 120, 20, '#3f7d50'); r(540, 1720, 110, 18, '#666'); r(722, 1720, 110, 18, '#666');
  r(0, 1756, 2880, 44, '#404040'); r(50, 1768, 66, 18, '#aaa'); r(2242, 1756, 74, 44, '#5c5c5c'); [2266, 2337, 2408].forEach(x => r(x, 1764, 26, 26, '#ddd'));
  r(2504, 1774, 200, 8, '#6e6e6e'); r(2582, 1762, 28, 28, '#aaa'); r(2775, 1768, 50, 18, '#aaa');
  root.innerHTML += `<svg viewBox="0 0 2880 1800" preserveAspectRatio="none" role="img" aria-label="Window preview">${m}</svg>`;
});

define('excel-window', `<style>
:host{display:flex;flex-direction:column;height:100vh;position:relative;overflow:hidden;background:#2d2d2d}
ribbon-tabs,ribbon-body,title-bar,formula-bar,bottom-scroll,sheet-tabs,status-bar{flex:none}
main{flex:1;display:flex;min-height:0;overflow:hidden}
</style>
<title-bar></title-bar><ribbon-tabs></ribbon-tabs><ribbon-body></ribbon-body><formula-bar></formula-bar>
<main><sheet-grid></sheet-grid><side-scroll></side-scroll></main>
<bottom-scroll></bottom-scroll><sheet-tabs></sheet-tabs><status-bar></status-bar><preview-float></preview-float>`);
</script>
</body>
</html>
